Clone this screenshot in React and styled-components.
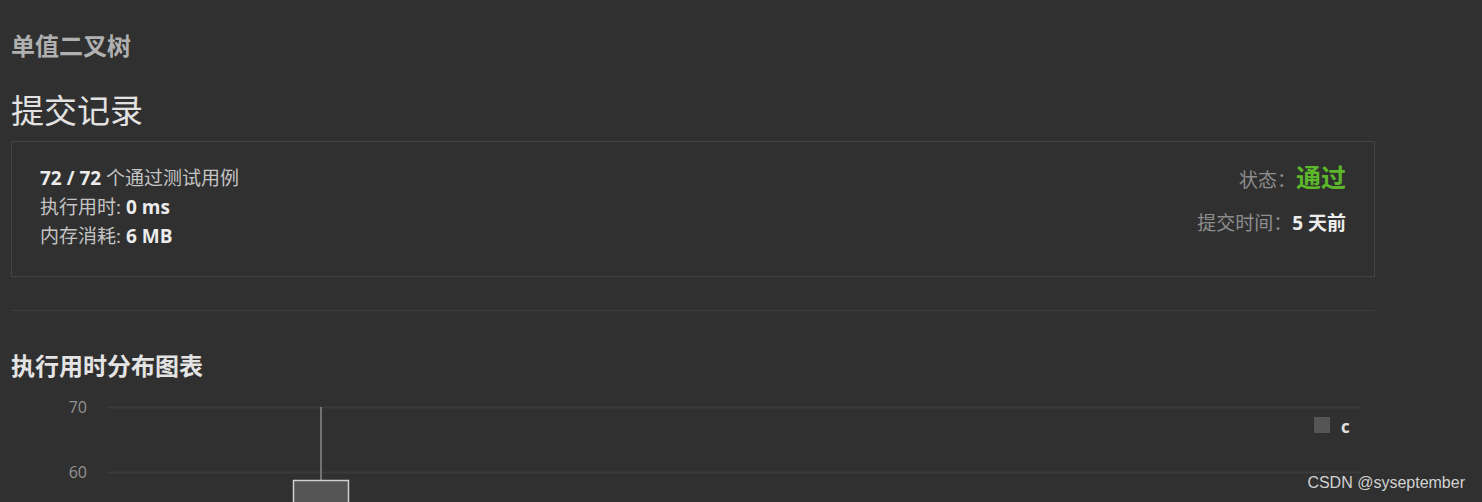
import React from "react";
import styled, { createGlobalStyle } from "styled-components";

const Global = createGlobalStyle`
  html, body { margin: 0; padding: 0; background: #303030; }
  body { font-family: "Open Sans", "Noto Sans CJK SC", sans-serif; color: #ddd; }
`;

const Page = styled.div`
  position: relative;
  width: 1482px;
  height: 502px;
  overflow: hidden;
  background: #303030;
  box-sizing: border-box;
  padding: 28px 11px 0 11px;
`;

const Content = styled.div`
  width: 1364px;
`;

const ProblemTitle = styled.h3`
  margin: 0;
  font-size: 24px;
  line-height: 34px;
  font-weight: 700;
  color: #b0b0b0;
  font-family: "Noto Sans CJK SC", sans-serif;
`;

const PageTitle = styled.h2`
  margin: 25px 0 0 0;
  font-size: 33px;
  line-height: 44px;
  font-weight: 400;
  color: #e2e2e2;
  font-family: "Noto Sans CJK SC", sans-serif;
`;

const Card = styled.div`
  margin-top: 10px;
  border: 1px solid #444;
  height: 136px;
  box-sizing: border-box;
  padding: 22px 28px 0 28px;
  display: flex;
  justify-content: space-between;
  align-items: flex-start;
`;

const Col = styled.div`
  display: flex;
  flex-direction: column;
  align-items: ${(p) => (p.$right ? "flex-end" : "flex-start")};
  margin-top: ${(p) => (p.$right ? "-4px" : "0")};
  gap: ${(p) => (p.$right ? "11px" : "0")};
`;

const Line = styled.div`
  font-size: 19px;
  line-height: ${(p) => (p.$right ? "32px" : "29px")};
  color: ${(p) => (p.$right ? "#8d8d8d" : "#c4c4c4")};
  font-family: "Open Sans", "Noto Sans CJK SC", sans-serif;
  white-space: nowrap;
`;

const Strong = styled.b`
  font-weight: 700;
  color: #ececec;
`;

const Green = styled.span`
  font-weight: 700;
  font-size: 25px;
  color: #5cb82a;
  font-family: "Noto Sans CJK SC", sans-serif;
`;

const Divider = styled.hr`
  margin: 33px 0 0 0;
  border: none;
  border-top: 1px solid #3d3d3d;
`;

const ChartTitle = styled.h3`
  margin: 36px 0 0 0;
  font-size: 24px;
  line-height: 36px;
  font-weight: 700;
  color: #e4e4e4;
  font-family: "Noto Sans CJK SC", sans-serif;
`;

const ChartWrap = styled.div`
  margin-left: -11px;
  line-height: 0;
`;

const Watermark = styled.div`
  position: absolute;
  right: 17px;
  bottom: 10px;
  font-family: "Liberation Sans", Arial, sans-serif;
  font-size: 16px;
  color: #d2d2d2;
`;

export default function App() {
  return (
    <>
      <Global />
      <Page>
        <Content>
          <ProblemTitle>单值二叉树</ProblemTitle>
          <PageTitle>提交记录</PageTitle>
          <Card>
            <Col>
              <Line><Strong>72 / 72</Strong> 个通过测试用例</Line>
              <Line>执行用时: <Strong>0 ms</Strong></Line>
              <Line>内存消耗: <Strong>6 MB</Strong></Line>
            </Col>
            <Col $right>
              <Line $right>状态：<Green>通过</Green></Line>
              <Line $right>提交时间：<Strong>5 天前</Strong></Line>
            </Col>
          </Card>
          <Divider />
          <ChartTitle>执行用时分布图表</ChartTitle>
        </Content>
        <ChartWrap>
          <svg width="1482" height="130" viewBox="0 383 1482 130">
            <line x1="107" y1="407.5" x2="1361" y2="407.5" stroke="#3b3b3b" strokeWidth="2" />
            <line x1="107" y1="472.5" x2="1361" y2="472.5" stroke="#3b3b3b" strokeWidth="2" />
            <text x="87" y="413" textAnchor="end" fill="#939393" fontSize="16" fontFamily="Open Sans, sans-serif">70</text>
            <text x="87" y="478" textAnchor="end" fill="#939393" fontSize="16" fontFamily="Open Sans, sans-serif">60</text>
            <line x1="321" y1="407" x2="321" y2="480" stroke="#888" strokeWidth="1.5" />
            <rect x="293.5" y="480.5" width="55" height="40" fill="#555" stroke="#d0d0d0" strokeWidth="1.5" />
            <rect x="1314" y="417" width="16" height="16" fill="#555" />
            <text x="1341" y="433" fill="#e0e0e0" fontSize="17" fontWeight="700" fontFamily="Open Sans, sans-serif">c</text>
          </svg>
        </ChartWrap>
      </Page>
      <Watermark>CSDN @syseptember</Watermark>
    </>
  );
}
